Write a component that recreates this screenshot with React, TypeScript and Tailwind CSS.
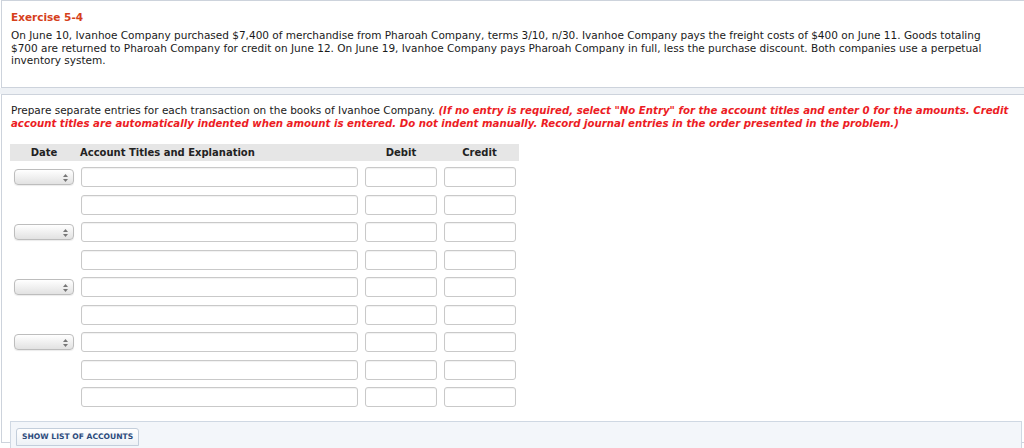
import React from 'react';

const font = { fontFamily: '"DejaVu Sans", Verdana, sans-serif' };

// which rows carry a date picker
const ROWS = [true, false, true, false, true, false, true, false, false];

function DateSelect() {
  return (
    <div className="relative w-[60px] h-[16px] rounded-[4px] border border-[#bdbdbd] bg-gradient-to-b from-[#ffffff] to-[#e2e2e2] shadow-[0_1px_1px_rgba(0,0,0,0.08)]">
      <svg className="absolute right-[5px] top-[4px]" width="5" height="8" viewBox="0 0 5 8">
        <path d="M2.5 0 L5 3 L0 3 Z" fill="#777" />
        <path d="M2.5 8 L5 5 L0 5 Z" fill="#777" />
      </svg>
    </div>
  );
}

function Field({ w }: { w: string }) {
  return <div className={`${w} h-[20px] rounded-[3px] border border-[#c9c9c9] bg-white shadow-[inset_0_1px_1px_rgba(0,0,0,0.06)]`} />;
}

export default function App() {
  return (
    <div className="w-[1024px] h-[448px] overflow-hidden bg-white text-[#1a1a1a]" style={font}>
      {/* Problem statement */}
      <div className="ml-px w-[1040px] h-[88px] border border-[#cdd3dc] bg-white pl-[9px] pt-[9px]">
        <div className="text-[10.5px] leading-[14px] font-bold text-[#d6401b]">Exercise 5-4</div>
        <div className="mt-[5px] text-[10.5px] leading-[12.5px] whitespace-nowrap">
          <div>On June 10, Ivanhoe Company purchased $7,400 of merchandise from Pharoah Company, terms 3/10, n/30. Ivanhoe Company pays the freight costs of $400 on June 11. Goods totaling</div>
          <div>$700 are returned to Pharoah Company for credit on June 12. On June 19, Ivanhoe Company pays Pharoah Company in full, less the purchase discount. Both companies use a perpetual</div>
          <div>inventory system.</div>
        </div>
      </div>

      <div className="h-[6px] bg-[#eef1f5]" />

      {/* Journal entry panel */}
      <div className="ml-px w-[1040px] h-[349px] border border-[#cdd3dc] bg-white pl-[8px] pt-[9px]">
        <div className="pl-px text-[10.5px] leading-[13px] whitespace-nowrap">
          <div>
            Prepare separate entries for each transaction on the books of Ivanhoe Company.{' '}
            <span className="font-bold italic text-[#ec1c24] text-[10.2px]">(If no entry is required, select "No Entry" for the account titles and enter 0 for the amounts. Credit</span>
          </div>
          <div className="font-bold italic text-[#ec1c24] text-[10.2px]">account titles are automatically indented when amount is entered. Do not indent manually. Record journal entries in the order presented in the problem.)</div>
        </div>

        <div className="mt-[14px] w-[509px] h-[17px] bg-[#e6e6e6] flex items-center text-[10px] font-bold text-[#222]">
          <div className="w-[68px] text-center">Date</div>
          <div className="w-[284px] pl-[2px]">Account Titles and Explanation</div>
          <div className="w-[78px] text-center">Debit</div>
          <div className="w-[79px] text-center">Credit</div>
        </div>

        <div className="mt-[6px] flex flex-col gap-y-[7.5px]">
          {ROWS.map((hasDate, i) => (
            <div key={i} className="flex items-center h-[20px]">
              <div className="w-[68px] pl-[4px]">{hasDate && <DateSelect />}</div>
              <div className="w-[284px] pl-[3px]"><Field w="w-[277px]" /></div>
              <div className="w-[78px] pl-[3px]"><Field w="w-[72px]" /></div>
              <div className="w-[79px] pl-[4px]"><Field w="w-[72px]" /></div>
            </div>
          ))}
        </div>

        <div className="mt-[14px] w-[1012px] h-[30px] border border-[#cfd8e3] bg-[#f3f6fa] pl-[5px] pt-[6px] flex items-start">
          <div className="flex items-center h-[18px] px-[5px] rounded-t-[3px] border border-[#c3cedb] bg-gradient-to-b from-white to-[#edf1f6] text-[7.6px] leading-[10px] font-bold text-[#2d4b7c]">
            SHOW LIST OF ACCOUNTS
          </div>
        </div>
      </div>
    </div>
  );
}
